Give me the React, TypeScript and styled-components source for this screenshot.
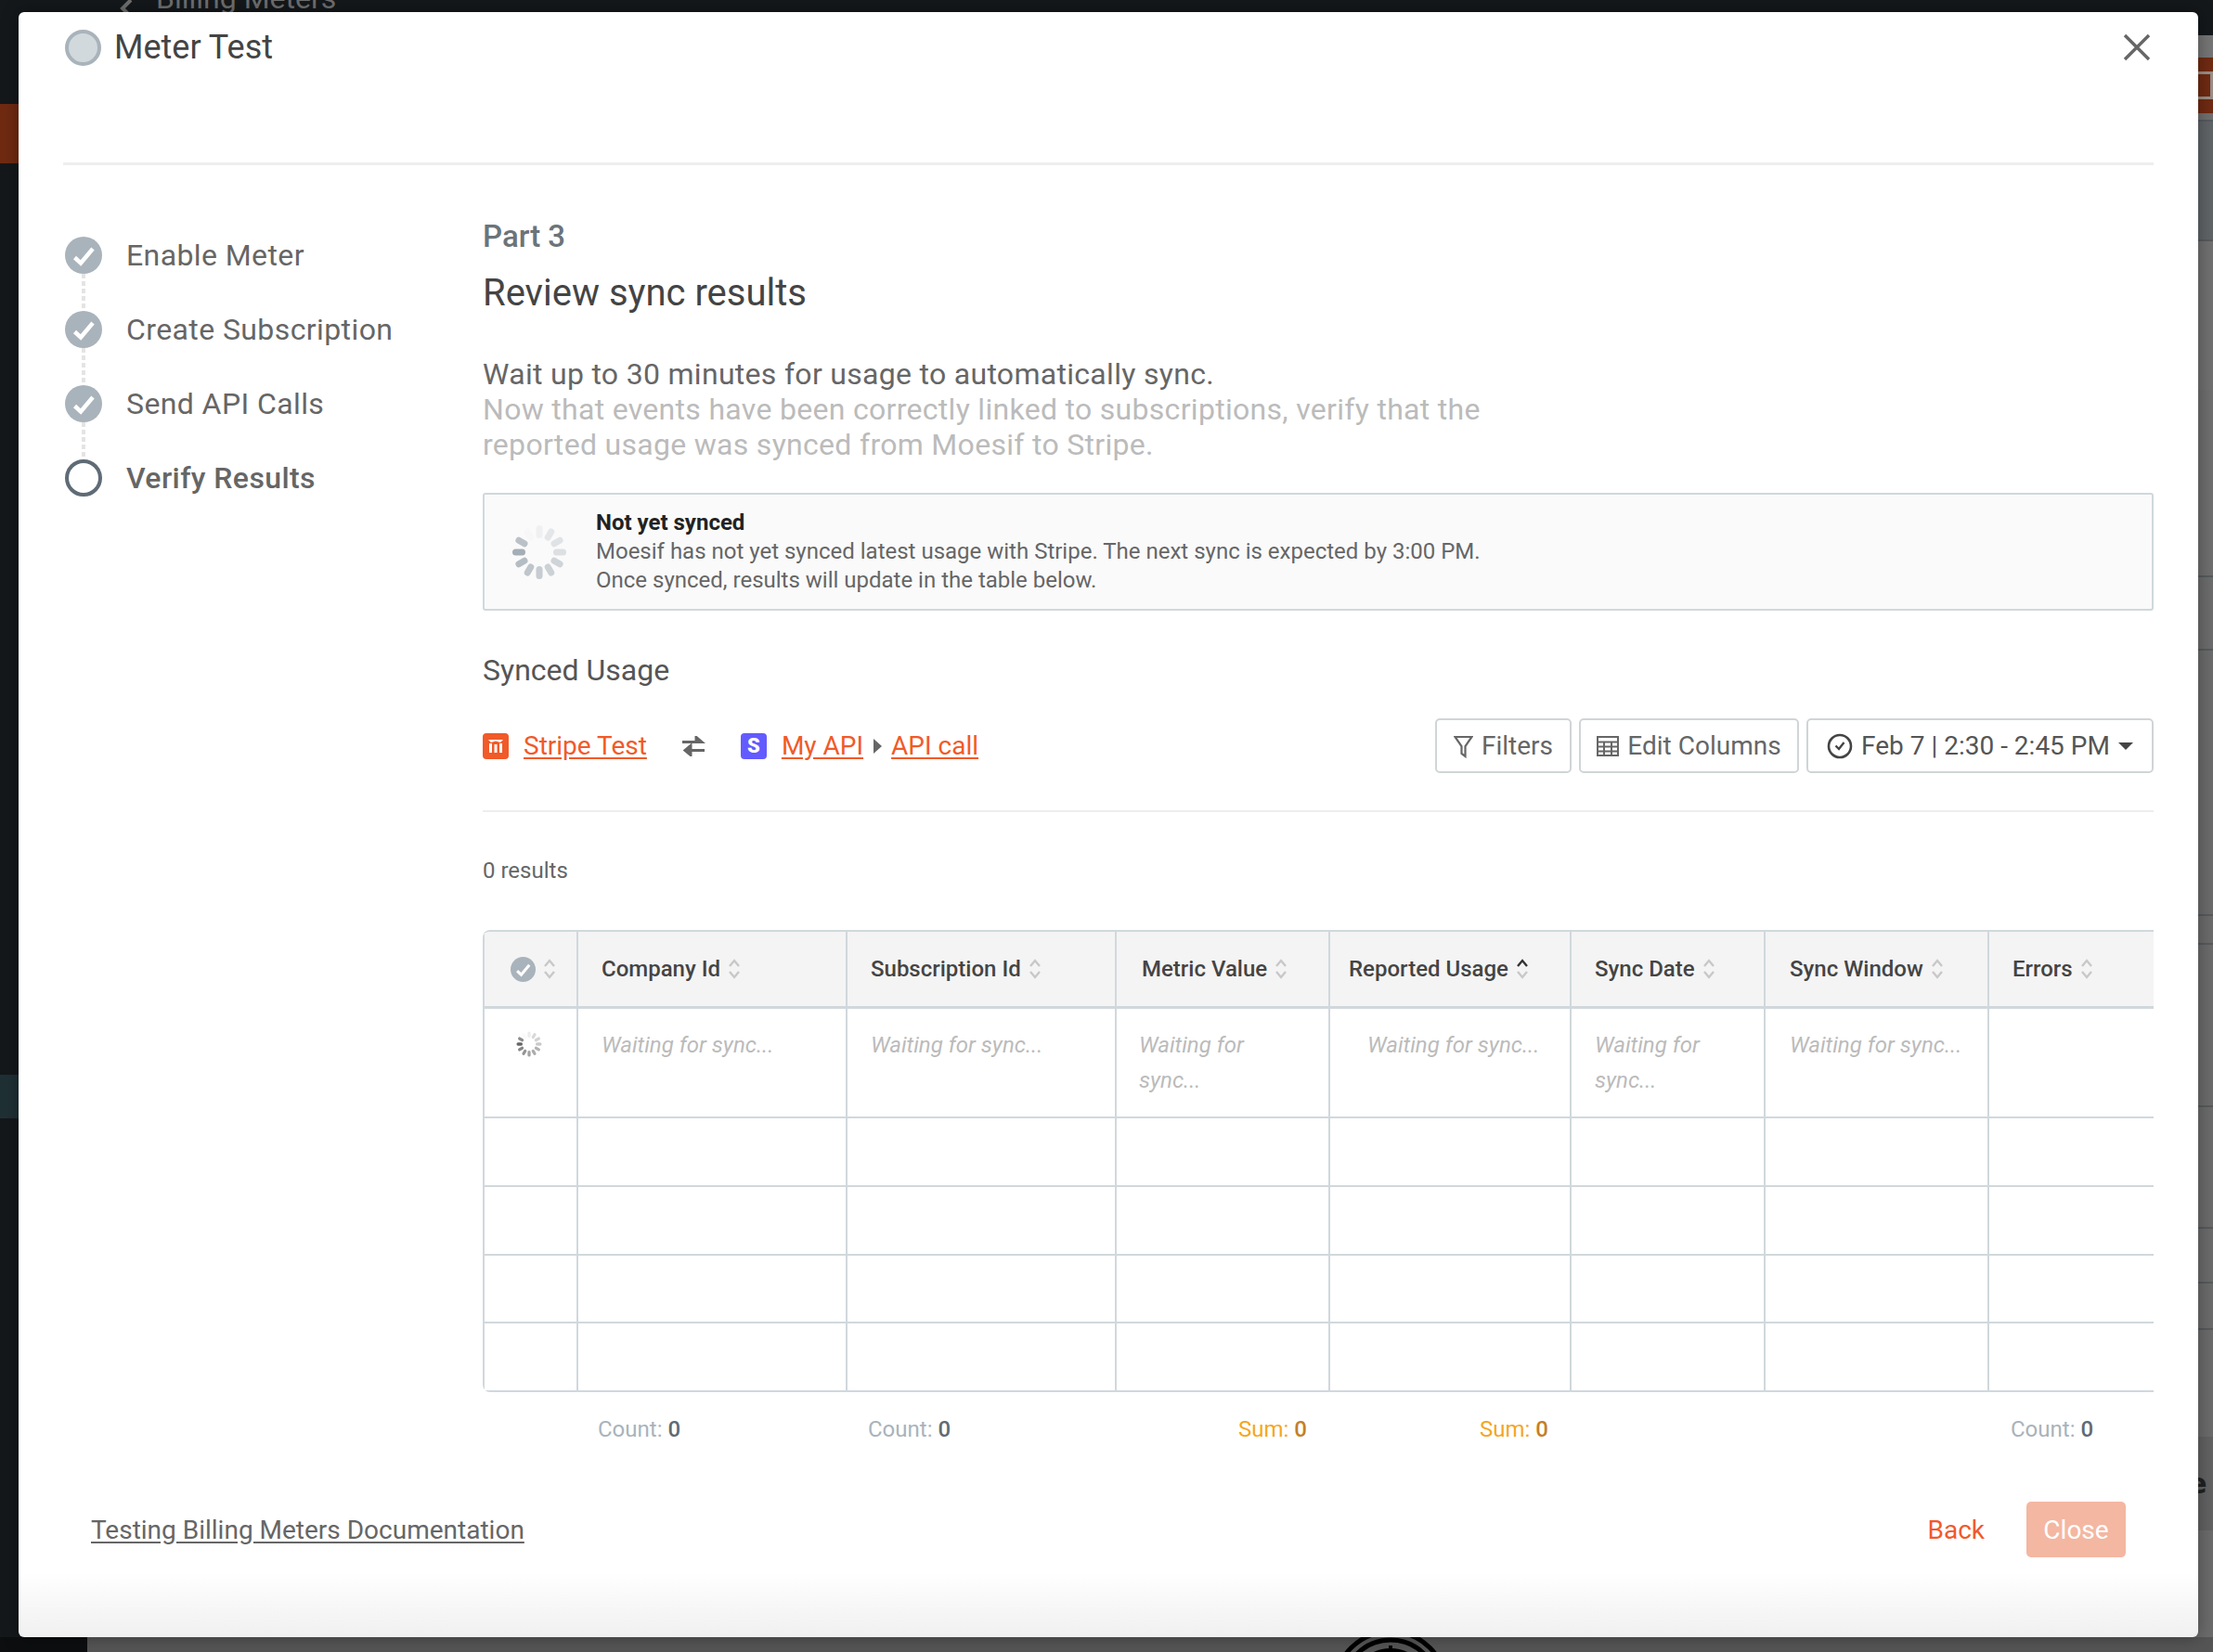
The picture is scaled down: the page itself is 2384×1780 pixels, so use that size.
import * as React from 'react';
import styled, { createGlobalStyle } from 'styled-components';

const GlobalStyle = createGlobalStyle`
    html, body {
        margin: 0;
        padding: 0;
        background: #14181b;
    }
    * {
        box-sizing: border-box;
    }
`;

const COLUMNS = '101px 290px 290px 230px 260px 209px 241px 179px';

const backdropRows = [
    { height: 24, tone: '#757575' },
    { height: 60, tone: '#702a12', glyph: true },
    { height: 9, tone: '#6f6f6f', ruled: true },
    { height: 129, tone: '#5f6466', ruled: true },
    { height: 90, tone: '#707070' },
    { height: 70, tone: '#707070', text: 's', ink: '#8a3415' },
    { height: 202, tone: '#6e6e6e', ruled: true },
    { height: 79, tone: '#6c6c6c', ruled: true },
    { height: 286, tone: '#6b6b6b', ruled: true },
    { height: 31, tone: '#6b6b6b', ruled: true },
    { height: 175, tone: '#6b6b6b', ruled: true },
    { height: 131, tone: '#6b6b6b', ruled: true },
    { height: 59, tone: '#6b6b6b', text: 'it', ink: '#2a2a2a', ruled: true },
    { height: 50, tone: '#6b6b6b', ruled: true },
    { height: 115, tone: '#6b6b6b' },
    { height: 101, tone: '#626262', text: 'te', ink: '#222', bold: true },
    { height: 115, tone: '#6b6b6b' },
];

const steps = [
    { label: 'Enable Meter', done: true },
    { label: 'Create Subscription', done: true },
    { label: 'Send API Calls', done: true },
    { label: 'Verify Results', done: false },
];

const headers = [
    { label: 'Company Id', inset: 27 },
    { label: 'Subscription Id', inset: 27 },
    { label: 'Metric Value', inset: 29 },
    { label: 'Reported Usage', inset: 22, active: true },
    { label: 'Sync Date', inset: 27 },
    { label: 'Sync Window', inset: 28 },
    { label: 'Errors', inset: 27 },
];

const waitingInsets = [27, 27, 26, 42, 27, 28];
const emptyRowHeights = [74, 74, 73, 74];

const Spinner: React.FC<{ size: number; color: string }> = ({ size, color }) => {
    const levels = [0.12, 0.25, 0.3, 0.35, 0.5, 0.55, 0.6, 0.7, 0.8, 1, 0.75, 0.03];
    return (
        <svg width={size} height={size} viewBox="0 0 60 60">
            {levels.map((level, i) => (
                <rect
                    key={i}
                    x="26.5"
                    y="1"
                    width="7"
                    height="14"
                    rx="3.5"
                    fill={color}
                    opacity={level}
                    transform={`rotate(${i * 30} 30 30)`}
                />
            ))}
        </svg>
    );
};

const CheckMark: React.FC<{ size: number }> = ({ size }) => (
    <svg width={size} height={size} viewBox="0 0 40 40">
        <circle cx="20" cy="20" r="20" fill="#a9b3bb" />
        <path d="M10.5 22.5 L17 28.5 L30 13" fill="none" stroke="#fff" strokeWidth="4.5" />
    </svg>
);

const SortIcon: React.FC<{ active?: boolean }> = ({ active }) => (
    <svg width="14" height="24" viewBox="0 0 14 24">
        <path d="M2 9 L7 3 L12 9" fill="none" stroke={active ? '#333' : '#c8c8c8'} strokeWidth="2.4" />
        <path d="M2 15 L7 21 L12 15" fill="none" stroke="#c8c8c8" strokeWidth="2.4" />
    </svg>
);

const App: React.FC = () => {
    return (
        <>
            <GlobalStyle />
            <Page>
                <TopBar>
                    <svg width="20" height="26" viewBox="0 0 20 26">
                        <path d="M15 0 L6 9 L15 18" fill="none" stroke="#6f6f6f" strokeWidth="4" />
                    </svg>
                    <TopBarTitle>Billing Meters</TopBarTitle>
                </TopBar>
                <Backdrop>
                    <Rail>
                        <RailBlock $top={74} $height={64} $tone="#702a12" />
                        <RailBlock $top={982} $height={47} $tone="#1f3035" />
                        <RailFoot />
                    </Rail>
                    <BackdropMain>
                        {backdropRows.map((row, i) => (
                            <BackdropRow key={i} $height={row.height} $tone={row.tone} $ruled={row.ruled}>
                                {row.glyph && <RowGlyph />}
                                {row.text && (
                                    <RowText $ink={row.ink} $bold={row.bold}>
                                        {row.text}
                                    </RowText>
                                )}
                            </BackdropRow>
                        ))}
                        <BottomBand>
                            <svg width="130" height="16" viewBox="0 0 130 16">
                                <circle cx="65" cy="54" r="60" fill="none" stroke="#000" strokeWidth="5" />
                                <circle cx="65" cy="54" r="51" fill="none" stroke="#000" strokeWidth="5" />
                                <circle cx="65" cy="54" r="40" fill="none" stroke="#000" strokeWidth="4" />
                                <rect x="63" y="9" width="4" height="8" fill="#000" />
                            </svg>
                        </BottomBand>
                    </BackdropMain>
                </Backdrop>

                <Modal>
                    <ModalHeader>
                        <StatusDot />
                        <ModalTitle>Meter Test</ModalTitle>
                        <CloseButton>
                            <svg width="30" height="30" viewBox="0 0 30 30">
                                <path d="M2 2 L28 28 M28 2 L2 28" stroke="#666" strokeWidth="3.4" />
                            </svg>
                        </CloseButton>
                    </ModalHeader>

                    <ModalBody>
                        <StepList>
                            {steps.map((step, i) => (
                                <React.Fragment key={step.label}>
                                    <StepRow>
                                        {step.done ? <CheckMark size={40} /> : <OpenStep />}
                                        <StepLabel $current={!step.done}>{step.label}</StepLabel>
                                    </StepRow>
                                    {i < steps.length - 1 && <StepConnector />}
                                </React.Fragment>
                            ))}
                        </StepList>

                        <Content>
                            <PartLabel>Part 3</PartLabel>
                            <Heading>Review sync results</Heading>
                            <Description>
                                Wait up to 30 minutes for usage to automatically sync.
                                <Muted>
                                    Now that events have been correctly linked to subscriptions, verify that the
                                    <br />
                                    reported usage was synced from Moesif to Stripe.
                                </Muted>
                            </Description>

                            <Notice>
                                <Spinner size={60} color="#a4aeb6" />
                                <NoticeText>
                                    <NoticeTitle>Not yet synced</NoticeTitle>
                                    Moesif has not yet synced latest usage with Stripe. The next sync is expected by 3:00 PM.
                                    <br />
                                    Once synced, results will update in the table below.
                                </NoticeText>
                            </Notice>

                            <SectionTitle>Synced Usage</SectionTitle>

                            <Toolbar>
                                <BrandIcon $tone="#f15a29">
                                    <svg width="18" height="16" viewBox="0 0 18 16">
                                        <path d="M1 1 H17 L14 4 L9 2.5 L4 4 Z" fill="#fff" />
                                        <rect x="2" y="5" width="3" height="10" fill="#fff" />
                                        <rect x="7.5" y="6" width="3" height="9" fill="#fff" />
                                        <rect x="13" y="5" width="3" height="10" fill="#fff" />
                                    </svg>
                                </BrandIcon>
                                <SourceLink href="#">Stripe Test</SourceLink>
                                <SwapIcon>
                                    <svg width="26" height="22" viewBox="0 0 26 22">
                                        <path d="M1 6.5 H20 M16 1.5 L22 6.5 L16 6.5 Z" stroke="#666" strokeWidth="3" fill="#666" />
                                        <path d="M25 15.5 H6 M10 10.5 L4 15.5 L10 20.5 Z" stroke="#666" strokeWidth="3" fill="#666" />
                                    </svg>
                                </SwapIcon>
                                <BrandIcon $tone="#635bff">
                                    <BrandLetter>S</BrandLetter>
                                </BrandIcon>
                                <SourceLink href="#">My API</SourceLink>
                                <CrumbCaret />
                                <CrumbLink href="#">API call</CrumbLink>
                                <Filters>
                                    <ToolButton $width={147}>
                                        <svg width="21" height="26" viewBox="0 0 21 26">
                                            <path d="M1.5 3 H19.5 L12.5 13 V24 L8.5 21 V13 Z" fill="none" stroke="#666" strokeWidth="2.2" />
                                        </svg>
                                        Filters
                                    </ToolButton>
                                    <ToolButton $width={237}>
                                        <svg width="24" height="22" viewBox="0 0 24 22">
                                            <rect x="1" y="1" width="22" height="20" fill="none" stroke="#666" strokeWidth="2" />
                                            <path d="M1 6.5 H23 M1 11.5 H23 M1 16.5 H23 M8 6 V21 M16 6 V21" stroke="#666" strokeWidth="2" />
                                        </svg>
                                        Edit Columns
                                    </ToolButton>
                                    <ToolButton $width={374} $dark>
                                        <svg width="28" height="28" viewBox="0 0 28 28">
                                            <circle cx="14" cy="14" r="12" fill="none" stroke="#444" strokeWidth="2.6" />
                                            <path d="M9.5 13.5 L13 17 L18.5 10" fill="none" stroke="#444" strokeWidth="2.4" />
                                        </svg>
                                        Feb 7 | 2:30 - 2:45 PM
                                        <DropCaret />
                                    </ToolButton>
                                </Filters>
                            </Toolbar>

                            <Rule />
                            <ResultCount>0 results</ResultCount>

                            <Table>
                                <HeadRow>
                                    <SelectCell>
                                        <CheckMark size={27} />
                                        <SortIcon />
                                    </SelectCell>
                                    {headers.map(header => (
                                        <HeadCell key={header.label} $inset={header.inset}>
                                            {header.label}
                                            <SortIcon active={header.active} />
                                        </HeadCell>
                                    ))}
                                </HeadRow>
                                <WaitingRow>
                                    <SpinnerCell>
                                        <Spinner size={28} color="#666" />
                                    </SpinnerCell>
                                    {waitingInsets.map((inset, i) => (
                                        <WaitingCell key={i} $inset={inset}>
                                            Waiting for sync...
                                        </WaitingCell>
                                    ))}
                                    <WaitingCell $inset={27} />
                                </WaitingRow>
                                {emptyRowHeights.map((height, i) => (
                                    <EmptyRow key={i} $height={height}>
                                        {Array.from({ length: 8 }).map((_, c) => (
                                            <EmptyCell key={c} />
                                        ))}
                                    </EmptyRow>
                                ))}
                            </Table>

                            <Totals>
                                <span />
                                <Total $inset={23}>
                                    Count: <TotalValue>0</TotalValue>
                                </Total>
                                <Total $inset={24}>
                                    Count: <TotalValue>0</TotalValue>
                                </Total>
                                <Total $sum>
                                    Sum: <TotalValue $sum>0</TotalValue>
                                </Total>
                                <Total $sum>
                                    Sum: <TotalValue $sum>0</TotalValue>
                                </Total>
                                <span />
                                <span />
                                <Total $inset={25}>
                                    Count: <TotalValue>0</TotalValue>
                                </Total>
                            </Totals>
                        </Content>
                    </ModalBody>

                    <ModalFooter>
                        <DocsLink href="#">Testing Billing Meters Documentation</DocsLink>
                        <BackLink>Back</BackLink>
                        <PrimaryButton>Close</PrimaryButton>
                    </ModalFooter>
                </Modal>
            </Page>
        </>
    );
};

const Page = styled.div`
    position: relative;
    width: 2384px;
    height: 1780px;
    overflow: hidden;
    background: #14181b;
    font-family: Roboto, 'Liberation Sans', sans-serif;
`;

const TopBar = styled.div`
    display: flex;
    align-items: flex-start;
    gap: 22px;
    height: 38px;
    padding-left: 126px;
    margin-top: 0;
`;

const TopBarTitle = styled.div`
    margin-top: -21px;
    font-size: 32px;
    line-height: 38px;
    color: #6f6f6f;
`;

const Backdrop = styled.div`
    display: flex;
    height: 1742px;
`;

const Rail = styled.div`
    display: flex;
    flex-direction: column;
    width: 120px;
`;

const RailBlock = styled.div<{ $top: number; $height: number; $tone: string }>`
    margin-top: ${p => p.$top}px;
    height: ${p => p.$height}px;
    background: ${p => p.$tone};
`;

const RailFoot = styled.div`
    margin-top: auto;
    height: 16px;
    background: #0c0e0f;
`;

const BackdropMain = styled.div`
    flex: 1;
    display: flex;
    flex-direction: column;
`;

const BackdropRow = styled.div<{ $height: number; $tone: string; $ruled?: boolean }>`
    display: flex;
    align-items: center;
    height: ${p => p.$height}px;
    padding-left: 2249px;
    overflow: hidden;
    background: ${p => p.$tone};
    border-bottom: ${p => (p.$ruled ? '2px solid #565a5d' : 'none')};
`;

const RowGlyph = styled.div`
    flex: none;
    width: 30px;
    height: 30px;
    margin-left: 11px;
    border: 3px solid #9a8f88;
`;

const RowText = styled.div<{ $ink?: string; $bold?: boolean }>`
    font-family: 'DejaVu Sans', sans-serif;
    font-size: 30px;
    font-weight: ${p => (p.$bold ? 700 : 400)};
    color: ${p => p.$ink};
    white-space: nowrap;
`;

const BottomBand = styled.div`
    height: 16px;
    padding-left: 1339px;
    overflow: hidden;
    background: #555;
    line-height: 0;
`;

const Modal = styled.div`
    position: absolute;
    left: 20px;
    top: 13px;
    width: 2348px;
    height: 1751px;
    padding: 0 48px;
    border-radius: 6px;
    background: linear-gradient(to bottom, #fff 0, #fff calc(100% - 70px), #f0f0f0 100%);
    box-shadow: 0 0 18px rgba(0, 0, 0, 0.35);
`;

const ModalHeader = styled.div`
    display: flex;
    align-items: center;
    height: 165px;
    padding: 0 0 86px 2px;
    border-bottom: 3px solid #eeeeee;
`;

const StatusDot = styled.div`
    width: 39px;
    height: 39px;
    border-radius: 50%;
    background: #d2d9dd;
    border: 4px solid #a9b3bb;
`;

const ModalTitle = styled.div`
    margin-left: 14px;
    font-size: 36px;
    line-height: 44px;
    color: #444;
`;

const CloseButton = styled.div`
    display: flex;
    margin-left: auto;
    margin-right: 3px;
`;

const ModalBody = styled.div`
    display: grid;
    grid-template-columns: 452px 1800px;
`;

const StepList = styled.div`
    display: flex;
    flex-direction: column;
    padding: 77px 0 0 2px;
`;

const StepRow = styled.div`
    display: flex;
    align-items: center;
    height: 40px;
`;

const OpenStep = styled.div`
    width: 40px;
    height: 40px;
    border-radius: 50%;
    border: 4px solid #5f6b75;
`;

const StepLabel = styled.div<{ $current?: boolean }>`
    margin-left: 26px;
    font-size: 32px;
    font-weight: ${p => (p.$current ? 500 : 400)};
    letter-spacing: 0.4px;
    color: #666;
`;

const StepConnector = styled.div`
    width: 4px;
    height: 40px;
    margin-left: 18px;
    background: repeating-linear-gradient(to bottom, #e4e4e4 0, #e4e4e4 5px, transparent 5px, transparent 8px);
`;

const Content = styled.div`
    padding-top: 58px;
`;

const PartLabel = styled.div`
    font-size: 33px;
    font-weight: 500;
    line-height: 38px;
    color: #6b747a;
`;

const Heading = styled.div`
    margin-top: 18px;
    font-size: 40px;
    line-height: 48px;
    color: #444;
`;

const Description = styled.div`
    margin-top: 44px;
    font-size: 32px;
    line-height: 38px;
    letter-spacing: 0.3px;
    color: #666;
`;

const Muted = styled.div`
    color: #bbbbbb;
`;

const Notice = styled.div`
    display: flex;
    align-items: center;
    gap: 31px;
    height: 127px;
    margin-top: 33px;
    padding-left: 29px;
    background: #fafafa;
    border: 2px solid #d0d8dc;
    border-radius: 3px;
`;

const NoticeText = styled.div`
    font-size: 24px;
    line-height: 31px;
    color: #666;
`;

const NoticeTitle = styled.div`
    font-weight: 700;
    color: #222;
`;

const SectionTitle = styled.div`
    margin-top: 44px;
    font-size: 32px;
    line-height: 40px;
    color: #555;
`;

const Toolbar = styled.div`
    display: flex;
    align-items: center;
    height: 59px;
    margin-top: 32px;
    font-size: 28px;
`;

const BrandIcon = styled.div<{ $tone: string }>`
    display: flex;
    align-items: center;
    justify-content: center;
    flex: none;
    width: 28px;
    height: 28px;
    border-radius: 4px;
    background: ${p => p.$tone};
`;

const BrandLetter = styled.span`
    font-size: 22px;
    font-weight: 900;
    line-height: 1;
    color: #fff;
`;

const SourceLink = styled.a`
    margin-left: 16px;
    color: #f15a29;
    text-decoration: underline;
    text-underline-offset: 3px;
`;

const CrumbLink = styled(SourceLink)`
    margin-left: 10px;
`;

const SwapIcon = styled.div`
    display: flex;
    margin: 0 38px 0 37px;
`;

const CrumbCaret = styled.div`
    width: 0;
    height: 0;
    margin-left: 11px;
    border-style: solid;
    border-width: 8px 0 8px 9px;
    border-color: transparent transparent transparent #666;
`;

const Filters = styled.div`
    display: flex;
    gap: 8px;
    margin-left: auto;
`;

const ToolButton = styled.div<{ $width: number; $dark?: boolean }>`
    display: flex;
    align-items: center;
    justify-content: center;
    gap: 9px;
    width: ${p => p.$width}px;
    height: 59px;
    border: 2px solid #d0d5d7;
    border-radius: 5px;
    background: #fff;
    color: ${p => (p.$dark ? '#555' : '#666')};
    white-space: nowrap;
`;

const DropCaret = styled.div`
    width: 0;
    height: 0;
    margin-left: 0;
    border-style: solid;
    border-width: 8px 8px 0 8px;
    border-color: #444 transparent transparent transparent;
`;

const Rule = styled.div`
    height: 2px;
    margin-top: 40px;
    background: #eeeeee;
`;

const ResultCount = styled.div`
    margin-top: 48px;
    font-size: 24px;
    line-height: 30px;
    color: #666;
`;

const Table = styled.div`
    margin-top: 49px;
    border-top: 2px solid #d0d8dc;
    border-radius: 8px 0 0 8px;
    overflow: hidden;
`;

const GridRow = styled.div`
    display: grid;
    grid-template-columns: ${COLUMNS};
    border-bottom: 2px solid #d0d8dc;
`;

const HeadRow = styled(GridRow)`
    height: 83px;
    border-bottom-width: 3px;
    background: #f4f4f4;
`;

const WaitingRow = styled(GridRow)`
    height: 118px;
`;

const EmptyRow = styled(GridRow)<{ $height: number }>`
    height: ${p => p.$height}px;
`;

const TableCell = styled.div`
    border-left: 2px solid #d0d8dc;
`;

const SelectCell = styled(TableCell)`
    display: flex;
    align-items: center;
    gap: 8px;
    padding-left: 28px;
`;

const HeadCell = styled(TableCell)<{ $inset: number }>`
    display: flex;
    align-items: center;
    gap: 8px;
    padding-left: ${p => p.$inset - 2}px;
    font-size: 24px;
    font-weight: 500;
    color: #444;
    white-space: nowrap;
`;

const SpinnerCell = styled(TableCell)`
    padding: 24px 0 0 34px;
`;

const WaitingCell = styled(TableCell)<{ $inset: number }>`
    padding: 20px 10px 0 ${p => p.$inset - 2}px;
    padding-right: ${p => (p.$inset === 42 ? 4 : 26)}px;
    font-size: 24px;
    font-style: italic;
    line-height: 38px;
    color: #bbbbbb;
`;

const EmptyCell = styled(TableCell)``;

const Totals = styled.div`
    display: grid;
    grid-template-columns: ${COLUMNS};
    margin-top: 25px;
`;

const Total = styled.div<{ $inset?: number; $sum?: boolean }>`
    padding-left: ${p => p.$inset ?? 0}px;
    padding-right: ${p => (p.$sum ? 23 : 0)}px;
    font-size: 24px;
    line-height: 30px;
    text-align: ${p => (p.$sum ? 'right' : 'left')};
    color: ${p => (p.$sum ? '#f5a623' : '#a9b3bb')};
`;

const TotalValue = styled.span<{ $sum?: boolean }>`
    font-weight: 500;
    color: ${p => (p.$sum ? '#c47f2a' : '#5f6b75')};
`;

const ModalFooter = styled.div`
    display: flex;
    align-items: center;
    height: 60px;
    margin-top: 63px;
    padding: 0 30px;
    font-size: 28px;
`;

const DocsLink = styled.a`
    color: #666;
    text-decoration: underline;
    text-underline-offset: 3px;
`;

const BackLink = styled.div`
    margin-left: auto;
    color: #f15a29;
`;

const PrimaryButton = styled.div`
    display: flex;
    align-items: center;
    justify-content: center;
    width: 107px;
    height: 60px;
    margin-left: 45px;
    border-radius: 5px;
    background: #f4b7a1;
    color: #fff;
`;

export default App;
